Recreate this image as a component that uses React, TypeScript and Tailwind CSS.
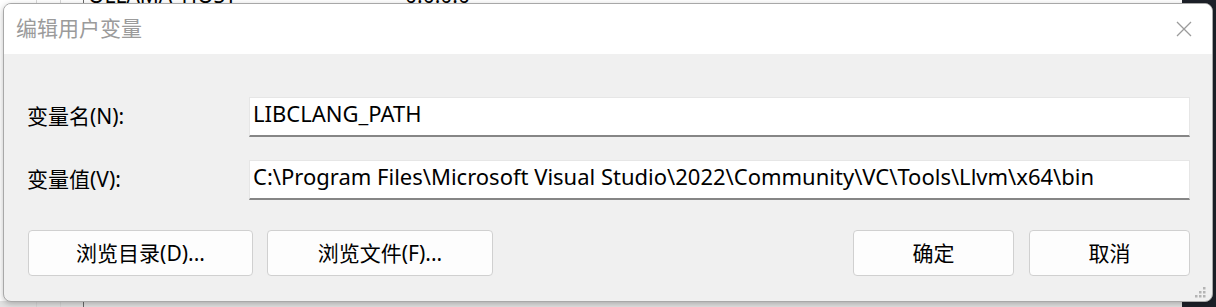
import React from 'react';

const FONT = { fontFamily: '"Noto Sans", "Noto Sans CJK SC", sans-serif' };

const TableLines: React.FC<{ className?: string }> = ({ className = '' }) => (
  <div className={`absolute left-0 w-[1182px] ${className}`}>
    <div className="absolute left-[36px] top-0 bottom-0 w-px bg-[#d8d8d8]" />
    <div className="absolute left-[60px] top-0 bottom-0 w-px bg-[#d8d8d8]" />
    <div className="absolute left-[83px] top-0 bottom-0 w-px bg-[#6a6a6a]" />
  </div>
);

const DialogButton: React.FC<{ label: string; className?: string }> = ({ label, className = '' }) => (
  <button
    className={`h-[46px] rounded-[4px] border border-[#d0d0d0] bg-[#fdfdfd] text-[21px] leading-none text-black ${className}`}
    style={FONT}
  >
    {label}
  </button>
);

const Field: React.FC<{ label: string; value: string }> = ({ label, value }) => (
  <div className="flex items-center">
    <div className="w-[245px] text-[21px] text-black pl-[23px]">{label}</div>
    <div className="flex-1 h-[40px] bg-white border-t border-l border-r border-[#e6e6e6] border-b-2 border-b-[#868686] flex items-start pt-[1px] pl-[3px]">
      <span className="text-[22px] text-black leading-[28px]">{value}</span>
    </div>
  </div>
);

export default function App() {
  return (
    <div className="relative w-[1216px] h-[307px] overflow-hidden bg-[#ececec]" style={FONT}>
      {/* window behind the dialog */}
      <div className="absolute left-0 top-0 w-[1182px] h-[307px] bg-white">
        <div className="absolute left-[88px] top-[-17px] text-[21px] leading-[24px] text-black">OLLAMA_HOST</div>
        <div className="absolute left-[405px] top-[-17px] text-[21px] leading-[24px] text-black">0.0.0.0</div>
        <div className="absolute left-0 bottom-0 w-full h-[6px] bg-[#e3e3e3]" />
      </div>
      <TableLines className="top-0 h-[4px]" />
      <TableLines className="bottom-0 h-[6px]" />
      <div className="absolute left-[1182px] top-0 right-0 bottom-0 bg-[#1d2129]" />

      {/* dialog */}
      <div className="absolute left-[3px] top-[3px] w-[1210px] h-[299px] rounded-[8px] border border-[#a8a8a8] bg-[#f0f0f0] overflow-hidden shadow-[0_2px_6px_rgba(0,0,0,0.25)] flex flex-col">
        <div className="h-[50px] bg-white flex items-center justify-between pl-[12px] pr-[20px] shrink-0">
          <span className="text-[21px] text-[#9b9b9b]">编辑用户变量</span>
          <svg width="16" height="16" viewBox="0 0 16 16" className="text-[#9b9b9b]">
            <path d="M1 1 L15 15 M15 1 L1 15" stroke="currentColor" strokeWidth="1.3" fill="none" />
          </svg>
        </div>

        <div className="flex-1 flex flex-col pr-[22px] relative">
          <div className="mt-[43px] flex flex-col gap-[23px]">
            <Field label="变量名(N):" value="LIBCLANG_PATH" />
            <Field label="变量值(V):" value="C:\Program Files\Microsoft Visual Studio\2022\Community\VC\Tools\Llvm\x64\bin" />
          </div>

          <div className="mt-[30px] flex items-center pl-[24px]">
            <DialogButton label="浏览目录(D)..." className="w-[225px]" />
            <DialogButton label="浏览文件(F)..." className="w-[226px] ml-[14px]" />
            <div className="flex-1" />
            <DialogButton label="确定" className="w-[161px]" />
            <DialogButton label="取消" className="w-[161px] ml-[15px]" />
          </div>

          {/* resize grip */}
          <svg width="12" height="12" viewBox="0 0 12 12" className="absolute right-[5px] bottom-[2px]">
            <g fill="#b4b4b4">
              <rect x="8" y="0" width="2.5" height="2.5" />
              <rect x="4" y="4" width="2.5" height="2.5" />
              <rect x="8" y="4" width="2.5" height="2.5" />
              <rect x="0" y="8" width="2.5" height="2.5" />
              <rect x="4" y="8" width="2.5" height="2.5" />
              <rect x="8" y="8" width="2.5" height="2.5" />
            </g>
          </svg>
        </div>
      </div>
    </div>
  );
}
